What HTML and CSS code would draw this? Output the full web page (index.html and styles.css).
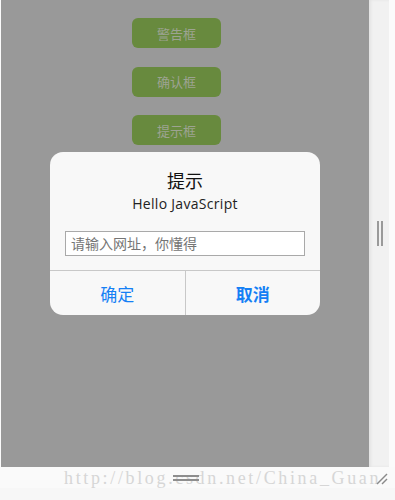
FILE: index.html
```html
<!DOCTYPE html>
<html lang="zh">
<head>
<meta charset="utf-8">
<link rel="stylesheet" href="styles.css">
</head>
<body>
<div class="frame">
  <div class="viewport">
    <div class="btn-col">
      <div class="btn">警告框</div>
      <div class="btn">确认框</div>
      <div class="btn">提示框</div>
    </div>
  </div>
  <div class="side">
    <div class="vgrip"><span></span><span></span></div>
  </div>
</div>
<div class="strip">
  <span class="mark">http://blog.csdn.net/China_Guan</span>
  <div class="hgrip"><span></span><span></span></div>
  <svg class="corner" width="14" height="14" viewBox="0 0 14 14">
    <line x1="2" y1="12" x2="12" y2="2" stroke="#8a8a8a" stroke-width="1.5"/>
    <line x1="7" y1="12" x2="12" y2="7" stroke="#8a8a8a" stroke-width="1.5"/>
  </svg>
</div>
<div class="dialog">
  <div class="dlg-body">
    <div class="dlg-title">提示</div>
    <div class="dlg-msg">Hello JavaScript</div>
    <div class="dlg-input">请输入网址，你懂得</div>
  </div>
  <div class="dlg-actions">
    <div class="dlg-btn">确定</div>
    <div class="dlg-btn bold">取消</div>
  </div>
</div>
</body>
</html>
```
FILE: styles.css
```css
html, body {
  margin: 0;
  padding: 0;
}
body {
  width: 395px;
  height: 500px;
  background: #f7f7f7;
  font-family: "Noto Sans CJK SC", "Open Sans", sans-serif;
  position: relative;
  overflow: hidden;
}
.frame {
  display: flex;
  height: 467px;
  background: #fbfbfb;
}
.viewport {
  width: 368px;
  margin-left: 1px;
  background: #999999;
  display: flex;
  justify-content: flex-start;
  padding: 18px 0 0 131px;
  box-sizing: border-box;
}
.btn-col {
  display: flex;
  flex-direction: column;
  gap: 18.5px;
}
.btn {
  width: 89px;
  height: 30px;
  border-radius: 6px;
  background: #688a3e;
  color: #9da392;
  font-size: 13px;
  display: flex;
  align-items: center;
  justify-content: center;
}
.side {
  width: 20px;
  background: #f1f1f1;
  box-shadow: inset 2px 0 3px rgba(0,0,0,0.06);
  display: flex;
  align-items: flex-start;
  justify-content: center;
  padding-top: 221px;
  box-sizing: border-box;
}
.vgrip {
  display: flex;
  gap: 2px;
  margin-left: 2px;
}
.vgrip span {
  width: 2px;
  height: 25px;
  background: #9a9a9a;
}
.strip {
  height: 21px;
  background: #fafafa;
  position: relative;
}
.mark {
  position: absolute;
  left: 64px;
  top: 0px;
  font-family: "Liberation Serif", serif;
  font-size: 18px;
  letter-spacing: 2.65px;
  color: #d6d6d6;
  white-space: nowrap;
  line-height: 22px;
}
.hgrip {
  position: absolute;
  left: 173px;
  top: 8px;
  display: flex;
  flex-direction: column;
  gap: 2px;
}
.hgrip span {
  width: 26px;
  height: 2px;
  background: #8e8e8e;
}
.corner {
  position: absolute;
  left: 375px;
  top: 5px;
}
.dialog {
  position: absolute;
  left: 50px;
  top: 152px;
  width: 270px;
  height: 163px;
  background: #f8f8f8;
  border-radius: 13px;
  overflow: hidden;
  display: flex;
  flex-direction: column;
}
.dlg-body {
  padding: 15px 15px 0;
  display: flex;
  flex-direction: column;
  align-items: center;
  height: 119px;
  box-sizing: border-box;
  border-bottom: 1px solid #c8c8c8;
}
.dlg-title {
  font-size: 18px;
  line-height: 26px;
  color: #111;
}
.dlg-msg {
  font-family: "Open Sans", sans-serif;
  font-size: 14px;
  letter-spacing: 0.3px;
  line-height: 20px;
  color: #222;
  margin-top: 1px;
}
.dlg-input {
  align-self: stretch;
  margin-top: 17px;
  height: 25px;
  border: 1px solid #a9a9a9;
  background: #fff;
  box-sizing: border-box;
  font-size: 14px;
  line-height: 23px;
  color: #757575;
  padding-left: 5px;
}
.dlg-actions {
  flex: 1;
  display: flex;
}
.dlg-btn {
  flex: 1;
  display: flex;
  align-items: center;
  justify-content: center;
  font-size: 17px;
  color: #1580f5;
}
.dlg-btn + .dlg-btn {
  border-left: 1px solid #c8c8c8;
}
.dlg-btn.bold {
  font-weight: bold;
}
```
